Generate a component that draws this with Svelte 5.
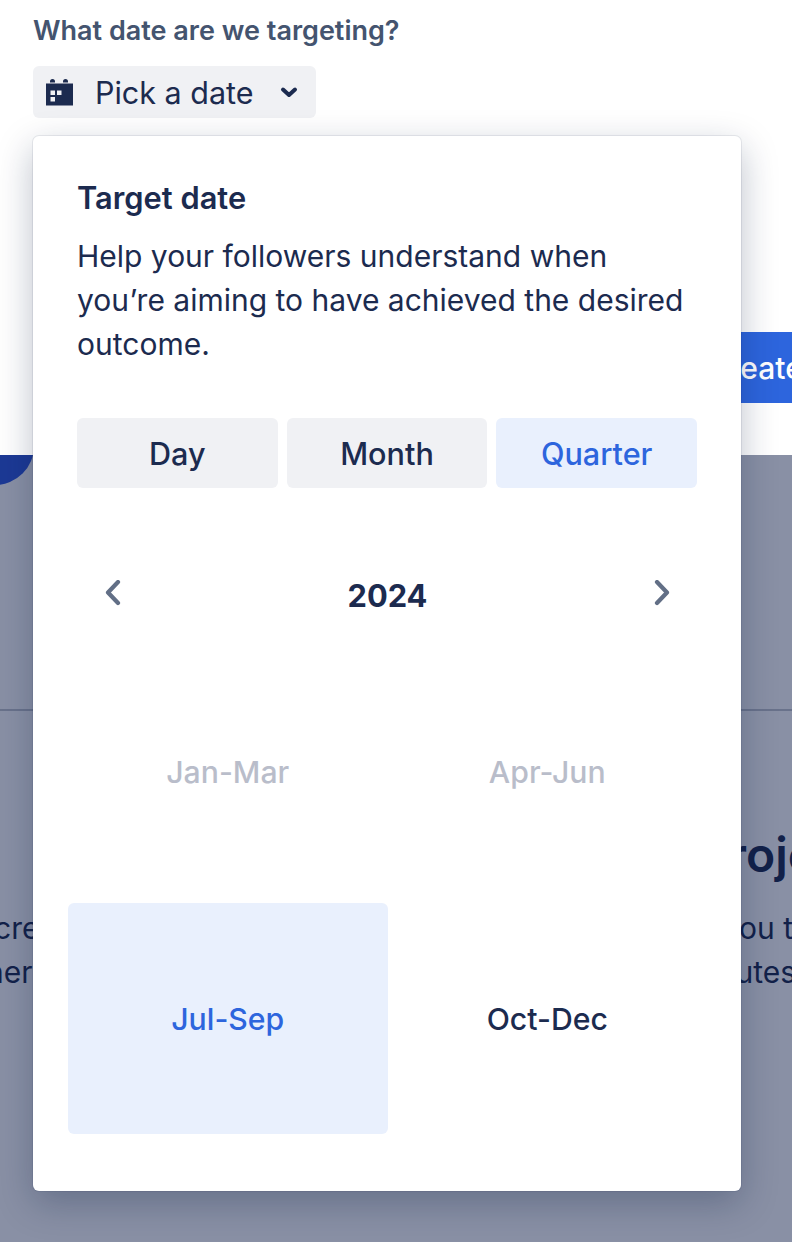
<script>
  const modes = [
    { label: "Day" },
    { label: "Month" },
    { label: "Quarter", active: true }
  ];

  const quarters = [
    { label: "Jan-Mar", disabled: true },
    { label: "Apr-Jun", disabled: true },
    { label: "Jul-Sep", selected: true },
    { label: "Oct-Dec" }
  ];
</script>

<div class="page">
  <section class="form">
    <div class="label">What date are we targeting?</div>
    <button class="trigger">
      <svg class="cal" width="27" height="27" viewBox="0 0 27 27">
        <path fill="#1c2b4f" fill-rule="evenodd" d="M0 4.500h27V26.500H0z M4.500 11.500v4.500h4.500v-4.500z M11 11.500v4.500h4.500v-4.500z M4.500 18v4.500h4.500V18z"/>
        <path fill="#1c2b4f" d="M4 3.500V2.500a2.500 2.500 0 0 1 5 0v1z M17 3.500V2.500a2.500 2.500 0 0 1 5 0v1z"/>
      </svg>
      <span>Pick a date</span>
      <svg width="20" height="14" viewBox="0 0 20 14">
        <path d="M4 4.500l6 5.500 6-5.500" fill="none" stroke="#1c2b4f" stroke-width="4" stroke-linecap="round" stroke-linejoin="round"/>
      </svg>
    </button>
    <div class="actions">
      <button class="create">Create</button>
    </div>
  </section>

  <section class="behind">
    <div class="blob"></div>
    <div class="rule"></div>
    <h2>Your first project</h2>
    <p class="line"><span class="cre">cre</span><span class="you">ou t</span></p>
    <p class="line"><span class="ner">ner</span><span class="utes">utes</span></p>
    <div class="dim"></div>
  </section>

  <div class="popover">
    <h3>Target date</h3>
    <p class="help">Help your followers understand when you’re aiming to have achieved the desired outcome.</p>

    <div class="modes">
      {#each modes as mode}
        <button class="mode" class:active={mode.active}>{mode.label}</button>
      {/each}
    </div>

    <div class="year">
      <svg width="20" height="30" viewBox="0 0 20 30">
        <path d="M15 2L5 12.500 15 23" fill="none" stroke="#626f86" stroke-width="4.200" stroke-linecap="round" stroke-linejoin="round"/>
      </svg>
      <strong>2024</strong>
      <svg width="20" height="30" viewBox="0 0 20 30">
        <path d="M5 2l10 10.500L5 23" fill="none" stroke="#626f86" stroke-width="4.200" stroke-linecap="round" stroke-linejoin="round"/>
      </svg>
    </div>

    <div class="quarters">
      {#each quarters as q}
        <button class="quarter" class:disabled={q.disabled} class:selected={q.selected}>{q.label}</button>
      {/each}
    </div>
  </div>
</div>

<style>
  :global(body) {
    margin: 0;
    background: #fff;
    font-family: Inter, "Liberation Sans", sans-serif;
    color: #1c2b4f;
  }

  button {
    font: inherit;
    color: inherit;
    border: 0;
    padding: 0;
  }

  .page {
    position: relative;
    width: 792px;
    height: 1242px;
    overflow: hidden;
  }

  .form {
    height: 455px;
    padding: 16px 0 0 33px;
    box-sizing: border-box;
    display: flex;
    flex-direction: column;
    align-items: flex-start;
  }

  .label {
    font-size: 27px;
    line-height: 30px;
    font-weight: 600;
    color: #44546f;
  }

  .trigger {
    margin-top: 20px;
    width: 283px;
    height: 52px;
    background: #f0f1f4;
    border-radius: 6px;
    display: flex;
    align-items: center;
    padding-left: 13px;
    box-sizing: border-box;
    font-size: 30.5px;
  }

  .cal {
    margin-right: 22px;
  }

  .trigger span {
    margin-right: 25px;
  }

  .actions {
    align-self: flex-end;
    margin-top: 214px;
    margin-right: -28px;
  }

  .create {
    width: 130px;
    height: 71px;
    background: #2d65dd;
    color: #fff;
    font-size: 30px;
    font-weight: 500;
    border-radius: 0;
  }

  .behind {
    position: relative;
    height: 787px;
    overflow: hidden;
  }

  .blob {
    position: absolute;
    left: -44px;
    top: -48px;
    width: 78px;
    height: 78px;
    border-radius: 50%;
    background: #2f59e0;
  }

  .rule {
    margin-top: 254px;
    height: 2px;
    background: #c1c5ce;
  }

  h2 {
    margin: 114px -69px 0 0;
    font-size: 48px;
    line-height: 60px;
    font-weight: 600;
    white-space: nowrap;
    display: flex;
    justify-content: flex-end;
  }

  .line {
    margin: 0;
    height: 44px;
    font-size: 30px;
    line-height: 44px;
    display: flex;
    justify-content: space-between;
    white-space: nowrap;
  }

  h2 + .line {
    margin-top: 21px;
  }

  .cre {
    margin-left: -6px;
  }

  .ner {
    margin-left: -14px;
  }

  .you {
    margin-right: -1px;
  }

  .utes {
    margin-right: -4px;
  }

  .dim {
    position: absolute;
    inset: 0;
    background: rgba(9, 22, 66, 0.48);
  }

  .popover {
    position: absolute;
    left: 33px;
    top: 136px;
    width: 708px;
    height: 1055px;
    box-sizing: border-box;
    padding: 44px 44px 57px;
    background: #fff;
    border-radius: 6px;
    box-shadow: 0 0 0 1px rgba(9, 30, 66, 0.08), 0 12px 36px rgba(9, 30, 66, 0.28);
  }

  h3 {
    margin: 0;
    font-size: 30.8px;
    line-height: 36px;
    font-weight: 600;
  }

  .help {
    margin: 18px 0 0;
    font-size: 30px;
    line-height: 44px;
  }

  .modes {
    margin-top: 52px;
    display: grid;
    grid-template-columns: repeat(3, 1fr);
    gap: 9px;
  }

  .mode {
    height: 70px;
    background: #f0f1f4;
    border-radius: 6px;
    font-size: 30.6px;
    font-weight: 500;
  }

  .mode.active {
    background: #e9f0fd;
    color: #2d65dd;
  }

  .year {
    margin-top: 84px;
    height: 46px;
    padding: 0 25px 0 26px;
    display: flex;
    justify-content: space-between;
    align-items: center;
  }

  .year strong {
    font-size: 30.8px;
    font-weight: 700;
  }

  .quarters {
    margin: 38px -10px 0 -9px;
    display: grid;
    grid-template-columns: repeat(2, 1fr);
    grid-auto-rows: 231px;
    row-gap: 16px;
  }

  .quarter {
    background: none;
    border-radius: 6px;
    font-size: 30.2px;
    font-weight: 500;
  }

  .quarter.disabled {
    color: #b9bdca;
  }

  .quarter.selected {
    background: #e9f0fd;
    color: #2d65dd;
  }
</style>
